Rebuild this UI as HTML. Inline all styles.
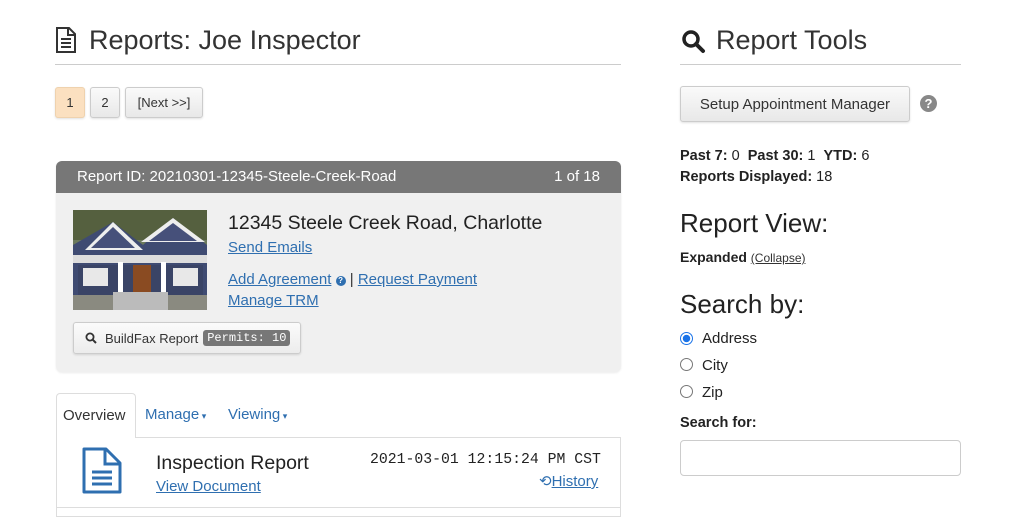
<!DOCTYPE html>
<html><head><meta charset="utf-8"><style>
*{margin:0;padding:0;box-sizing:border-box}
body{width:1024px;height:512px;overflow:hidden;background:#fff;font-family:"Liberation Sans","DejaVu Sans",sans-serif;color:#222;position:relative}
.a{position:absolute;white-space:nowrap}
a,.lk{color:#2f6fb0;text-decoration:underline}
.btn{position:absolute;border:1px solid #ccc;border-radius:3px;background:linear-gradient(#fafafa,#e8e8e8);box-shadow:0 1px 2px rgba(0,0,0,.12);font-size:13px;color:#333;display:flex;align-items:center;justify-content:center}
.rad{position:absolute;width:13px;height:13px;border:1px solid #777;border-radius:50%;background:#fff}
</style></head><body>
<svg class="a" style="left:55px;top:27px" width="22" height="26" viewBox="0 0 22 26"><path d="M2 1h12l6 6v18H2z" fill="none" stroke="#333" stroke-width="2"/><path d="M13 1v7h7" fill="none" stroke="#333" stroke-width="2"/><path d="M6 12h10M6 16h10M6 20h10" stroke="#333" stroke-width="2"/></svg>
<div class="a" style="left:89px;top:25px;font-size:27px;color:#333">Reports: Joe Inspector</div>
<div class="a" style="left:55px;top:64px;width:566px;height:1px;background:#ccc"></div>
<div class="btn" style="left:55px;top:87px;width:30px;height:31px;background:#fbe0c0;border-color:#efd2ae">1</div>
<div class="btn" style="left:90px;top:87px;width:30px;height:31px">2</div>
<div class="btn" style="left:125px;top:87px;width:78px;height:31px">[Next &gt;&gt;]</div>
<div class="a" style="left:56px;top:161px;width:565px;height:211px;background:#f0f0f0;border-radius:6px;overflow:hidden;box-shadow:0 1px 2px rgba(0,0,0,.08)">
 <div style="height:32px;background:#777;color:#fff;font-size:15px;line-height:32px;padding:0 21px;display:flex;justify-content:space-between"><span>Report ID: 20210301-12345-Steele-Creek-Road</span><span>1 of 18</span></div>
</div>
<svg class="a" style="left:73px;top:210px" width="134" height="100" viewBox="0 0 134 100">
<rect width="134" height="100" fill="#6c7a5c"/><rect width="134" height="30" fill="#55603f"/>
<polygon points="0,35 40,12 70,35 100,8 134,35 134,100 0,100" fill="#3f4b72"/>
<polygon points="40,12 70,40 12,40" fill="#eee"/><polygon points="40,17 62,38 18,38" fill="#46507a"/>
<polygon points="100,8 132,32 68,32" fill="#eee"/><polygon points="100,13 124,31 76,31" fill="#46507a"/>
<rect x="0" y="45" width="134" height="8" fill="#ddd"/>
<rect x="5" y="55" width="125" height="30" fill="#3a4466"/>
<rect x="60" y="55" width="18" height="30" fill="#8a4b22"/>
<rect x="100" y="58" width="25" height="18" fill="#e8e8e8"/><rect x="10" y="58" width="25" height="18" fill="#e8e8e8"/>
<rect x="45" y="52" width="5" height="35" fill="#fff"/><rect x="88" y="52" width="5" height="35" fill="#fff"/>
<rect x="0" y="85" width="134" height="15" fill="#8a8a80"/><rect x="40" y="82" width="55" height="18" fill="#bbb"/>
</svg>
<div class="a" style="left:228px;top:212px;font-size:19.5px;color:#222">12345 Steele Creek Road, Charlotte</div>
<div class="a lk" style="left:228px;top:239px;font-size:15px">Send Emails</div>
<div class="a" style="left:228px;top:271px;font-size:15px;color:#333"><span class="lk">Add Agreement</span> <span style="display:inline-block;width:10px;height:10px;border-radius:50%;background:#2f6fb0;color:#fff;font-size:8px;line-height:10px;text-align:center;font-weight:bold;vertical-align:1px">?</span> | <span class="lk">Request Payment</span></div>
<div class="a lk" style="left:228px;top:292px;font-size:15px">Manage TRM</div>
<div class="btn" style="left:73px;top:322px;width:228px;height:32px;justify-content:flex-start;padding-left:11px;background:linear-gradient(#fbfbfb,#ececec)">
<svg width="12" height="12" viewBox="0 0 12 12"><circle cx="5" cy="5" r="3.6" fill="none" stroke="#333" stroke-width="1.8"/><path d="M7.6 7.6L11 11" stroke="#333" stroke-width="2"/></svg>
<span style="margin-left:8px">BuildFax Report</span><span style="margin-left:5px;background:#777;color:#fff;font-family:'Liberation Mono',monospace;font-size:12px;padding:1px 4px;border-radius:3px">Permits: 10</span></div>
<div class="a" style="left:56px;top:393px;width:80px;height:45px;border:1px solid #ddd;border-bottom:none;border-radius:4px 4px 0 0;background:#fff;z-index:2;font-size:15px;color:#333;padding:13px 0 0 6px">Overview</div>
<div class="a" style="left:145px;top:406px;font-size:15px;color:#2f6fb0">Manage<span style="font-size:9px"> ▾</span></div>
<div class="a" style="left:228px;top:406px;font-size:15px;color:#2f6fb0">Viewing<span style="font-size:9px"> ▾</span></div>
<div class="a" style="left:56px;top:437px;width:565px;height:80px;border:1px solid #ddd"></div>
<div class="a" style="left:56px;top:507px;width:565px;height:1px;background:#ddd"></div>
<svg class="a" style="left:81px;top:447px" width="42" height="47" viewBox="0 0 42 47"><path d="M3 2h22l14 14v29H3z" fill="none" stroke="#2f6fb0" stroke-width="3" stroke-linejoin="round"/><path d="M24 2v15h15" fill="none" stroke="#2f6fb0" stroke-width="3"/><path d="M11 25h20M11 31h20M11 37h20" stroke="#2f6fb0" stroke-width="3"/></svg>
<div class="a" style="left:156px;top:452px;font-size:19.5px;color:#222">Inspection Report</div>
<div class="a lk" style="left:156px;top:478px;font-size:15px">View Document</div>
<div class="a" style="left:370px;top:452px;font-size:14.8px;font-family:'Liberation Mono',monospace;color:#222">2021-03-01 12:15:24 PM CST</div>
<div class="a" style="left:539px;top:472px;font-size:15px;color:#2f6fb0">⟲<span class="lk">History</span></div>
<svg class="a" style="left:681px;top:29px" width="25" height="25" viewBox="0 0 25 25"><circle cx="10" cy="10" r="7" fill="none" stroke="#222" stroke-width="3.5"/><path d="M15 15l7 7" stroke="#222" stroke-width="4" stroke-linecap="round"/></svg>
<div class="a" style="left:716px;top:25px;font-size:27px;color:#333">Report Tools</div>
<div class="a" style="left:680px;top:64px;width:281px;height:1px;background:#ccc"></div>
<div class="btn" style="left:680px;top:86px;width:230px;height:36px;font-size:15px">Setup Appointment Manager</div>
<div class="a" style="left:920px;top:95px;width:17px;height:17px;border-radius:50%;background:#888;color:#fff;font-size:13px;font-weight:bold;text-align:center;line-height:17px">?</div>
<div class="a" style="left:680px;top:146px;font-size:14.5px;color:#222;line-height:21px"><b>Past 7:</b> 0 &nbsp;<b>Past 30:</b> 1 &nbsp;<b>YTD:</b> 6<br><b>Reports Displayed:</b> 18</div>
<div class="a" style="left:680px;top:208px;font-size:26px;color:#222">Report View:</div>
<div class="a" style="left:680px;top:249px;font-size:14px"><b>Expanded</b> <span style="font-size:12px;text-decoration:underline;color:#333">(Collapse)</span></div>
<div class="a" style="left:680px;top:289px;font-size:26px;color:#222">Search by:</div>
<div class="rad" style="left:680px;top:332px;border-color:#1a73e8;background:radial-gradient(#1a73e8 45%,#fff 50%)"></div>
<div class="a" style="left:702px;top:330px;font-size:15px">Address</div>
<div class="rad" style="left:680px;top:358px"></div>
<div class="a" style="left:702px;top:357px;font-size:15px">City</div>
<div class="rad" style="left:680px;top:385px"></div>
<div class="a" style="left:702px;top:384px;font-size:15px">Zip</div>
<div class="a" style="left:680px;top:415px;font-size:14.5px;font-weight:bold">Search for:</div>
<div class="a" style="left:680px;top:440px;width:281px;height:36px;border:1px solid #ccc;border-radius:4px"></div>
</body></html>
